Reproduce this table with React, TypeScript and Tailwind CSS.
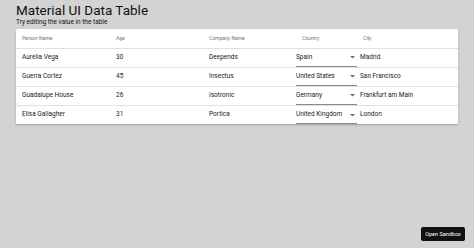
type Row = { name: string; age: number; company: string; country: string; city: string };

const ROWS: Row[] = [
  { name: "Aurelia Vega", age: 30, company: "Deepends", country: "Spain", city: "Madrid" },
  { name: "Guerra Cortez", age: 45, company: "Insectus", country: "United States", city: "San Francisco" },
  { name: "Guadalupe House", age: 26, company: "Isotronic", country: "Germany", city: "Frankfurt am Main" },
  { name: "Elisa Gallagher", age: 31, company: "Portica", country: "United Kingdom", city: "London" },
];

function Th({ children }: { children: React.ReactNode }) {
  return (
    <th className="h-[19px] border-b border-[#e0e0e0] pl-[6px] text-left align-middle text-[5px] font-normal text-[#757575]">
      {children}
    </th>
  );
}

export default function App() {
  return (
    <div className="relative h-[248px] w-[474px] overflow-hidden bg-[#d3d3d3] font-['Roboto',sans-serif]">
      <div className="px-4 pt-[3px]">
        <h1 className="text-[13.5px] leading-[15px] text-[#111]">Material UI Data Table</h1>
        <p className="mt-[1px] text-[6.5px] leading-[7px] text-[#111]">Try editing the value in the table</p>
        <div className="mt-[3px] w-[442px] rounded-[1px] bg-white shadow-[0_1px_2px_rgba(0,0,0,0.25)]">
          <table className="w-full table-fixed border-collapse">
            <colgroup>
              <col className="w-[94px]" />
              <col className="w-[93px]" />
              <col className="w-[93px]" />
              <col className="w-[61px]" />
              <col />
            </colgroup>
            <thead>
              <tr>
                <Th>Person Name</Th>
                <Th>Age</Th>
                <Th>Company Name</Th>
                <Th>Country</Th>
                <Th>City</Th>
              </tr>
            </thead>
            <tbody>
              {ROWS.map((r, i) => (
                <tr key={r.name} className={i < ROWS.length - 1 ? "border-b border-[#e0e0e0]" : ""}>
                  <td className="h-[19px] pl-[6px] text-[6.5px] text-[#212121]">{r.name}</td>
                  <td className="pl-[6px] text-[6.5px] text-[#212121]">{r.age}</td>
                  <td className="pl-[6px] text-[6.5px] text-[#212121]">{r.company}</td>
                  <td className="h-[19px] p-0 align-bottom">
                    <div className="flex h-[18px] items-center justify-between border-b border-[#8a8a8a] pt-[1px] pr-[1px] text-[6.5px] text-[#212121]">
                      <span>{r.country}</span>
                      <svg width="5" height="3" viewBox="0 0 5 3" className="mr-[1px]">
                        <path d="M0 0 L5 0 L2.5 2.5 Z" fill="#6b6b6b" />
                      </svg>
                    </div>
                  </td>
                  <td className="pl-[3px] text-[6.5px] text-[#212121]">{r.city}</td>
                </tr>
              ))}
            </tbody>
          </table>
        </div>
      </div>
      <button className="absolute left-[421px] top-[227px] flex h-[14px] w-[44px] items-center justify-center rounded-[2px] bg-[#111] text-[5.5px] text-white">
        Open Sandbox
      </button>
    </div>
  );
}
